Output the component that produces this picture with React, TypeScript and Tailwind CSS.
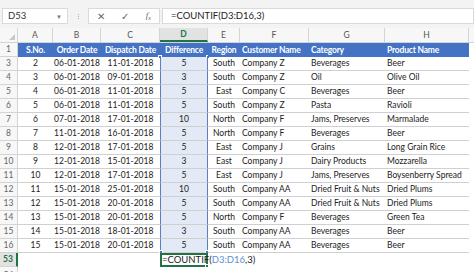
import React from "react"

const rows: string[][] = [
  ["3", "2", "06-01-2018", "11-01-2018", "5", "South", "Company Z", "Beverages", "Beer"],
  ["4", "3", "06-01-2018", "09-01-2018", "3", "South", "Company Z", "Oil", "Olive Oil"],
  ["5", "4", "06-01-2018", "11-01-2018", "5", "East", "Company C", "Beverages", "Beer"],
  ["6", "5", "06-01-2018", "11-01-2018", "5", "South", "Company Z", "Pasta", "Ravioli"],
  ["7", "6", "07-01-2018", "17-01-2018", "10", "North", "Company F", "Jams, Preserves", "Marmalade"],
  ["8", "7", "11-01-2018", "16-01-2018", "5", "North", "Company F", "Beverages", "Beer"],
  ["9", "8", "12-01-2018", "17-01-2018", "5", "East", "Company J", "Grains", "Long Grain Rice"],
  ["10", "9", "12-01-2018", "15-01-2018", "3", "East", "Company J", "Dairy Products", "Mozzarella"],
  ["11", "10", "12-01-2018", "17-01-2018", "5", "East", "Company J", "Jams, Preserves", "Boysenberry Spread"],
  ["12", "11", "15-01-2018", "25-01-2018", "10", "South", "Company AA", "Dried Fruit & Nuts", "Dried Plums"],
  ["13", "12", "15-01-2018", "20-01-2018", "5", "South", "Company AA", "Dried Fruit & Nuts", "Dried Plums"],
  ["14", "13", "15-01-2018", "20-01-2018", "5", "North", "Company F", "Beverages", "Green Tea"],
  ["15", "14", "15-01-2018", "18-01-2018", "3", "South", "Company AA", "Beverages", "Beer"],
  ["16", "15", "15-01-2018", "20-01-2018", "5", "South", "Company AA", "Beverages", "Beer"],
]

const cols = ["A", "B", "C", "D", "E", "F", "G", "H"]
const widths = ["w-[35px]", "w-[48px]", "w-[59px]", "w-[48px]", "w-[32px]", "w-[69px]", "w-[76px]", "w-[84px]"]
const headers = ["S.No.", "Order Date", "Dispatch Date", "Difference", "Region", "Customer Name", "Category", "Product Name"]

function Handle({ pos }: { pos: string }) {
  return <span className={`absolute w-[4px] h-[4px] bg-[#4a72b8] border border-white ${pos}`} />
}

export default function App() {
  return (
    <div className="w-[474px] h-[272px] overflow-hidden bg-white text-[#222] font-['Lato',sans-serif] text-[8.5px]">
      {/* formula bar */}
      <div className="h-[28px] bg-[#f3f3f3] pt-[8px]">
        <div className="h-[16px] flex items-center">
          <div className="ml-[2px] w-[66px] h-full bg-white border border-[#dadada] flex items-center justify-between px-[5px]">
            <span className="text-[9.5px] text-[#333]">D53</span>
            <span className="text-[6px] text-[#777]">▼</span>
          </div>
          <div className="w-[20px] flex justify-center">
            <div className="flex flex-col gap-[1px]">
              <span className="w-[1px] h-[1px] bg-[#b0b0b0]" />
              <span className="w-[1px] h-[1px] bg-[#b0b0b0]" />
              <span className="w-[1px] h-[1px] bg-[#b0b0b0]" />
            </div>
          </div>
          <div className="w-[72px] h-full bg-white border border-[#dadada] flex items-center justify-around text-[#666]">
            <span className="text-[10px]">✕</span>
            <span className="text-[10px]">✓</span>
            <span className="text-[9px] italic font-['Liberation_Serif',serif]">f<sub className="text-[6px]">x</sub></span>
          </div>
          <div className="flex-1 h-full ml-[2px] bg-white border border-[#dadada] flex items-center pl-[8px] text-[9.5px] text-[#222]">
            =COUNTIF(D3:D16,3)
          </div>
        </div>
      </div>

      {/* column letters */}
      <div className="flex h-[15px] bg-[#f7f7f7] border-b border-[#d4d4d4] text-[#555]">
        <div className="w-[18px] border-r border-[#d4d4d4] relative">
          <span className="absolute right-[2px] bottom-[2px] w-0 h-0 border-l-[6px] border-l-transparent border-b-[6px] border-b-[#c8c8c8]" />
        </div>
        {cols.map((c, i) => (
          <div
            key={c}
            className={`${widths[i]} flex items-center justify-center border-r border-[#d4d4d4] ${
              c === "D" ? "bg-[#e2e2e2] text-[#217346] font-bold border-b-2 border-b-[#217346]" : ""
            }`}
          >
            {c}
          </div>
        ))}
      </div>

      {/* header row */}
      <div className="flex h-[14px]">
        <div className="w-[18px] flex items-center justify-center text-[#666] bg-[#f7f7f7] border-r border-b border-[#d4d4d4]">1</div>
        {headers.map((h, i) => (
          <div
            key={h}
            className={`${widths[i]} relative bg-[#4472c4] text-white font-bold tracking-[-0.2px] flex items-center whitespace-nowrap ${
              i >= 5 ? "pl-[2px]" : "justify-center"
            }`}
          >
            {h}
            {i === 3 && (
              <>
                <Handle pos="-left-[2px] -bottom-[2px]" />
                <Handle pos="-right-[2px] -bottom-[2px]" />
              </>
            )}
          </div>
        ))}
      </div>

      {/* data rows */}
      {rows.map((r, ri) => (
        <div key={r[0]} className="flex h-[14px]">
          <div className="w-[18px] flex items-center justify-center text-[#666] bg-[#f7f7f7] border-r border-b border-[#d4d4d4]">{r[0]}</div>
          {r.slice(1).map((v, i) => (
            <div
              key={i}
              className={`${widths[i]} relative flex items-center whitespace-nowrap border-b border-[#d0d0d0] ${
                i >= 5 ? "pl-[2px]" : "justify-center"
              } ${i === 3 ? "bg-[#e3eaf5] border-x border-x-[#5b7fc0]" : ""}`}
            >
              {v}
              {i === 3 && ri === rows.length - 1 && (
                <>
                  <Handle pos="-left-[2px] -bottom-[2px]" />
                  <Handle pos="-right-[2px] -bottom-[2px]" />
                </>
              )}
            </div>
          ))}
        </div>
      ))}

      {/* row 53 */}
      <div className="flex h-[14px]">
        <div className="w-[18px] flex items-center justify-center text-[#217346] font-bold bg-[#e2e2e2] border-r-2 border-r-[#217346] border-b border-b-[#d4d4d4]">53</div>
        <div className="w-[142px]" />
        <div className="w-[48px] relative border-2 border-[#217346] flex items-center">
          <span className="absolute left-[0px] whitespace-nowrap text-[9.5px] text-[#222]">
            =COUNTIF(<span className="text-[#5b8fd6]">D3:D16</span>,3)
          </span>
          <span className="absolute -right-[3px] -bottom-[3px] w-[4px] h-[4px] bg-[#217346] border border-white" />
        </div>
      </div>

      {/* row 54 */}
      <div className="flex h-[14px]">
        <div className="w-[18px] flex items-start justify-center pt-[2px] text-[#666] bg-[#f7f7f7] border-r border-[#d4d4d4]">54</div>
      </div>
    </div>
  )
}
